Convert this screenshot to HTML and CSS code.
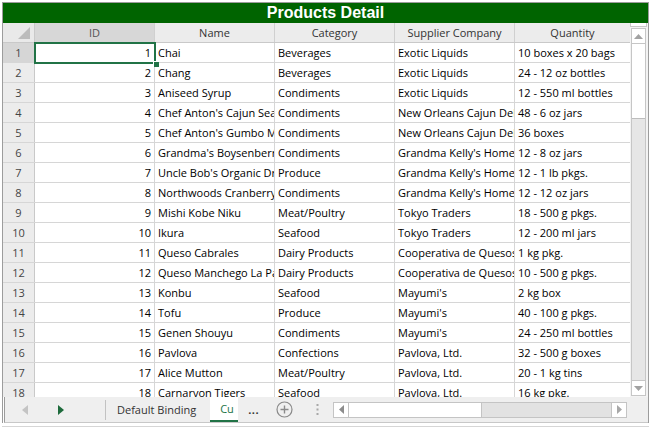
FILE: index.html
```html
<!DOCTYPE html>
<html>
<head>
<meta charset="utf-8">
<link rel="stylesheet" href="styles.css">
</head>
<body>
<div class="frame">
  <div class="title">Products Detail</div>
  <div class="main">
    <div class="sheet">
      <div class="row head">
        <div class="rh corner"><svg width="12" height="12" viewBox="0 0 12 12"><polygon points="12,0 12,12 0,12" fill="#bcbcbc"/></svg></div>
        <div class="c hc hsel">ID</div>
        <div class="c hc">Name</div>
        <div class="c hc">Category</div>
        <div class="c hc">Supplier Company</div>
        <div class="c hc last">Quantity</div>
      </div>
      <div class="row"><div class="rh rsel">1</div><div class="c num">1</div><div class="c">Chai</div><div class="c">Beverages</div><div class="c">Exotic Liquids</div><div class="c last">10 boxes x 20 bags</div></div>
      <div class="row"><div class="rh">2</div><div class="c num">2</div><div class="c">Chang</div><div class="c">Beverages</div><div class="c">Exotic Liquids</div><div class="c last">24 - 12 oz bottles</div></div>
      <div class="row"><div class="rh">3</div><div class="c num">3</div><div class="c">Aniseed Syrup</div><div class="c">Condiments</div><div class="c">Exotic Liquids</div><div class="c last">12 - 550 ml bottles</div></div>
      <div class="row"><div class="rh">4</div><div class="c num">4</div><div class="c">Chef Anton's Cajun Seasoning</div><div class="c">Condiments</div><div class="c">New Orleans Cajun Delights</div><div class="c last">48 - 6 oz jars</div></div>
      <div class="row"><div class="rh">5</div><div class="c num">5</div><div class="c">Chef Anton's Gumbo Mix</div><div class="c">Condiments</div><div class="c">New Orleans Cajun Delights</div><div class="c last">36 boxes</div></div>
      <div class="row"><div class="rh">6</div><div class="c num">6</div><div class="c">Grandma's Boysenberry Spread</div><div class="c">Condiments</div><div class="c">Grandma Kelly's Homestead</div><div class="c last">12 - 8 oz jars</div></div>
      <div class="row"><div class="rh">7</div><div class="c num">7</div><div class="c">Uncle Bob's Organic Dried Pears</div><div class="c">Produce</div><div class="c">Grandma Kelly's Homestead</div><div class="c last">12 - 1 lb pkgs.</div></div>
      <div class="row"><div class="rh">8</div><div class="c num">8</div><div class="c">Northwoods Cranberry Sauce</div><div class="c">Condiments</div><div class="c">Grandma Kelly's Homestead</div><div class="c last">12 - 12 oz jars</div></div>
      <div class="row"><div class="rh">9</div><div class="c num">9</div><div class="c">Mishi Kobe Niku</div><div class="c">Meat/Poultry</div><div class="c">Tokyo Traders</div><div class="c last">18 - 500 g pkgs.</div></div>
      <div class="row"><div class="rh">10</div><div class="c num">10</div><div class="c">Ikura</div><div class="c">Seafood</div><div class="c">Tokyo Traders</div><div class="c last">12 - 200 ml jars</div></div>
      <div class="row"><div class="rh">11</div><div class="c num">11</div><div class="c">Queso Cabrales</div><div class="c">Dairy Products</div><div class="c">Cooperativa de Quesos 'Las Cabras'</div><div class="c last">1 kg pkg.</div></div>
      <div class="row"><div class="rh">12</div><div class="c num">12</div><div class="c">Queso Manchego La Pastora</div><div class="c">Dairy Products</div><div class="c">Cooperativa de Quesos 'Las Cabras'</div><div class="c last">10 - 500 g pkgs.</div></div>
      <div class="row"><div class="rh">13</div><div class="c num">13</div><div class="c">Konbu</div><div class="c">Seafood</div><div class="c">Mayumi's</div><div class="c last">2 kg box</div></div>
      <div class="row"><div class="rh">14</div><div class="c num">14</div><div class="c">Tofu</div><div class="c">Produce</div><div class="c">Mayumi's</div><div class="c last">40 - 100 g pkgs.</div></div>
      <div class="row"><div class="rh">15</div><div class="c num">15</div><div class="c">Genen Shouyu</div><div class="c">Condiments</div><div class="c">Mayumi's</div><div class="c last">24 - 250 ml bottles</div></div>
      <div class="row"><div class="rh">16</div><div class="c num">16</div><div class="c">Pavlova</div><div class="c">Confections</div><div class="c">Pavlova, Ltd.</div><div class="c last">32 - 500 g boxes</div></div>
      <div class="row"><div class="rh">17</div><div class="c num">17</div><div class="c">Alice Mutton</div><div class="c">Meat/Poultry</div><div class="c">Pavlova, Ltd.</div><div class="c last">20 - 1 kg tins</div></div>
      <div class="row"><div class="rh">18</div><div class="c num">18</div><div class="c">Carnarvon Tigers</div><div class="c">Seafood</div><div class="c">Pavlova, Ltd.</div><div class="c last">16 kg pkg.</div></div>
      <div class="selbox"></div>
      <div class="handle"></div>
    </div>
    <div class="vscroll">
      <div class="vcap"></div>
      <div class="vbar">
        <div class="sbtn"><svg width="9" height="5" viewBox="0 0 9 5"><polygon points="0,5 9,5 4.5,0" fill="#a2a2a2"/></svg></div>
        <div class="vthumb"></div>
        <div class="vtrack"></div>
        <div class="sbtn down"><svg width="9" height="5" viewBox="0 0 9 5"><polygon points="0,0 9,0 4.5,5" fill="#a2a2a2"/></svg></div>
      </div>
    </div>
  </div>
  <div class="tabbar">
    <div class="nav">
      <svg width="6" height="10" viewBox="0 0 6 10"><polygon points="6,0 6,10 0,5" fill="#c4c4c4"/></svg>
      <svg width="6" height="10" viewBox="0 0 6 10"><polygon points="0,0 0,10 6,5" fill="#1e6b3c"/></svg>
    </div>
    <div class="sep"></div>
    <div class="tab">Default Binding</div>
    <div class="tab active"><span class="tabclip">Customize</span></div>
    <div class="more">...</div>
    <svg class="plus" width="17" height="17" viewBox="0 0 17 17"><circle cx="8.5" cy="8.5" r="7.5" fill="none" stroke="#8a8a8a" stroke-width="1.2"/><path d="M8.5 4.5v8M4.5 8.5h8" stroke="#8a8a8a" stroke-width="1.4"/></svg>
    <svg class="dots" width="3" height="11" viewBox="0 0 3 11"><rect x="0.5" y="0" width="2" height="2" fill="#a8a8a8"/><rect x="0.5" y="4.5" width="2" height="2" fill="#a8a8a8"/><rect x="0.5" y="9" width="2" height="2" fill="#a8a8a8"/></svg>
    <div class="hscroll">
      <div class="hbtn"><svg width="5" height="9" viewBox="0 0 5 9"><polygon points="5,0 5,9 0,4.5" fill="#8c8c8c"/></svg></div>
      <div class="hthumb"></div>
      <div class="htrack"></div>
      <div class="hbtn right"><svg width="5" height="9" viewBox="0 0 5 9"><polygon points="0,0 0,9 5,4.5" fill="#a8a8a8"/></svg></div>
    </div>
  </div>
</div>
<div class="baseline"></div>
</body>
</html>
```

FILE: styles.css
```css
html, body {
  margin: 0;
  padding: 0;
  background: #ffffff;
}
body {
  font-family: "Open Sans", "Noto Sans", sans-serif;
  font-size: 11px;
  color: #000;
}
.frame {
  margin: 2px 0 0 2px;
  width: 645px;
  border: 1px solid #9c9c9c;
  border-bottom: none;
  box-sizing: content-box;
}
.title {
  height: 20px;
  background: #006400;
  color: #fff;
  font-family: "Liberation Sans", Arial, sans-serif;
  font-weight: bold;
  font-size: 16px;
  line-height: 20px;
  text-align: center;
}
.main {
  display: flex;
  height: 374px;
}
.sheet {
  position: relative;
  width: 627px;
  height: 374px;
  overflow: hidden;
}
.row {
  display: flex;
  height: 20px;
  box-sizing: border-box;
  border-bottom: 1px solid #d6d6d6;
}
.row.head {
  background: #ececec;
  border-bottom: 1px solid #c9c9c9;
}
.rh {
  width: 32px;
  flex: none;
  box-sizing: border-box;
  background: #ececec;
  border-right: 1px solid #c9c9c9;
  color: #444;
  text-align: center;
  line-height: 19px;
}
.rh.rsel {
  background: #d6d6d6;
}
.corner {
  display: flex;
  align-items: flex-end;
  justify-content: flex-end;
  padding: 0 4px 3px 0;
  background: #e9e9e9;
}
.c {
  width: 120px;
  flex: none;
  box-sizing: border-box;
  border-right: 1px solid #d6d6d6;
  padding: 0 3px;
  white-space: nowrap;
  overflow: hidden;
  line-height: 19px;
}
.c.last {
  width: 115px;
  border-right: none;
}
.c.num {
  text-align: right;
}
.hc {
  text-align: center;
  color: #333;
  border-right: 1px solid #d0d0d0;
}
.hc.hsel {
  background: #d7d7d7;
  color: #555;
}
.selbox {
  position: absolute;
  left: 31px;
  top: 19px;
  width: 122px;
  height: 22px;
  box-sizing: border-box;
  border: 2px solid #217346;
}
.handle {
  position: absolute;
  left: 150px;
  top: 38px;
  width: 5px;
  height: 5px;
  background: #217346;
  border: 1px solid #fff;
  border-right: none;
  border-bottom: none;
}
.vscroll {
  width: 18px;
  flex: none;
  display: flex;
  flex-direction: column;
  background: #f3f3f3;
}
.vcap {
  height: 3px;
  margin: 0 1px 1px 0;
  border: 1px solid #c8c8c8;
  border-top: none;
  background: #fff;
}
.vbar {
  flex: 1;
  display: flex;
  flex-direction: column;
  margin: 0 2px 1px 1px;
  border: 1px solid #c6c6c6;
  background: #e6e6e6;
}
.sbtn {
  height: 14px;
  display: flex;
  align-items: center;
  justify-content: center;
  background: #fff;
  border-bottom: 1px solid #c6c6c6;
}
.sbtn.down {
  border-bottom: none;
  border-top: 1px solid #c6c6c6;
}
.vthumb {
  height: 74px;
  background: #fff;
  border-bottom: 1px solid #bdbdbd;
}
.vtrack {
  flex: 1;
}
.tabbar {
  display: flex;
  align-items: center;
  height: 25px;
  margin-left: 1px;
  border-left: 1px solid #9c9c9c;
  border-bottom: 1px solid #c8c8c8;
  background: #efefef;
  color: #333;
}
.nav {
  width: 100px;
  flex: none;
  display: flex;
  align-items: center;
  gap: 30px;
  padding-left: 17px;
  box-sizing: border-box;
}
.sep {
  width: 1px;
  height: 20px;
  background: #c2c2c2;
}
.tab {
  padding: 0 14px 0 11px;
  font-size: 11px;
  white-space: nowrap;
}
.tab.active {
  width: 28px;
  box-sizing: border-box;
  padding: 0 0 0 10px;
  align-self: stretch;
  line-height: 23px;
  background: #fff;
  color: #217346;
  border-bottom: 2px solid #217346;
}
.tabclip {
  display: block;
  width: 14px;
  overflow: hidden;
  white-space: nowrap;
}
.more {
  margin-left: 10px;
  font-weight: bold;
  letter-spacing: 0.5px;
  color: #333;
}
.plus {
  margin-left: 17px;
}
.dots {
  margin-left: 23px;
}
.hscroll {
  margin-left: 14px;
  width: 294px;
  height: 16px;
  box-sizing: border-box;
  display: flex;
  border: 1px solid #c4c4c4;
  background: #e2e2e2;
}
.hbtn {
  width: 14px;
  display: flex;
  align-items: center;
  justify-content: center;
  background: #fff;
  border-right: 1px solid #c4c4c4;
}
.hbtn.right {
  border-right: none;
  border-left: 1px solid #c4c4c4;
}
.hthumb {
  width: 132px;
  background: #fff;
  border-right: 1px solid #c4c4c4;
}
.htrack {
  flex: 1;
}
.baseline {
  margin: 3px 0 0 2px;
  width: 647px;
  height: 1px;
  background: #d6d6d6;
}
```
